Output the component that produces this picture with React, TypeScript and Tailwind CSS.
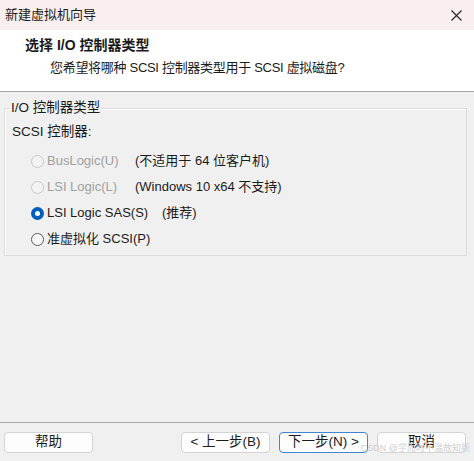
const font = {
  fontFamily: '"Liberation Sans", "Noto Sans CJK SC", sans-serif',
};

type Opt = { label: string; note?: string; disabled?: boolean; checked?: boolean; noteIndent?: boolean };

const options: Opt[] = [
  { label: 'BusLogic(U)', note: '(不适用于 64 位客户机)', disabled: true },
  { label: 'LSI Logic(L)', note: '(Windows 10 x64 不支持)', disabled: true },
  { label: 'LSI Logic SAS(S)', note: '(推荐)', checked: true, noteIndent: true },
  { label: '准虚拟化 SCSI(P)' },
];

function Radio({ checked, disabled }: { checked?: boolean; disabled?: boolean }) {
  if (checked) {
    return (
      <span className="w-[13px] h-[13px] rounded-full bg-[#005fb8] flex items-center justify-center shrink-0">
        <span className="w-[5px] h-[5px] rounded-full bg-white" />
      </span>
    );
  }
  return (
    <span
      className={`w-[13px] h-[13px] rounded-full border shrink-0 ${
        disabled ? 'border-[#c8c8c8] bg-[#f3f3f3]' : 'border-[#5a5a5a] bg-[#f7f7f7]'
      }`}
    />
  );
}

function Btn({ children, primary }: { children: React.ReactNode; primary?: boolean }) {
  return (
    <button
      className={`w-[89px] h-[21px] rounded-[4px] bg-[#fdfdfd] text-[13.5px] text-[#1b1b1b] leading-none flex items-center justify-center border ${
        primary ? 'border-[#3f86d0]' : 'border-[#d4d4d4]'
      }`}
    >
      {children}
    </button>
  );
}

export default function App() {
  return (
    <div className="w-[474px] h-[461px] bg-[#f0f0f0] flex flex-col overflow-hidden text-[#1b1b1b]" style={font}>
      <div className="h-[30px] bg-[#f9efee] flex items-center justify-between pl-[5px] pr-[10px] text-[13px]">
        <span>新建虚拟机向导</span>
        <svg width="11" height="11" viewBox="0 0 11 11" className="mr-[2px]">
          <path d="M0.5 0.5 L10.5 10.5 M10.5 0.5 L0.5 10.5" stroke="#222" strokeWidth="1.1" />
        </svg>
      </div>

      <div className="h-[62px] bg-white border-b border-[#a8a8a8] pl-[25px] pt-[6px]">
        <div className="text-[14px] font-bold leading-[18px]">选择 I/O 控制器类型</div>
        <div className="text-[13px] tracking-[-0.3px] leading-[20px] pl-[25px] mt-[4px] whitespace-nowrap">
          您希望将哪种 SCSI 控制器类型用于 SCSI 虚拟磁盘?
        </div>
      </div>

      <div className="flex-1 px-[4px] pt-[7px]">
        <fieldset className="w-[463px] h-[157px] border border-[#dcdcdc] shadow-[inset_1px_1px_0_#ffffff] px-[7px] pt-[6px]">
          <legend className="text-[13.5px] px-[1px] ml-[-2px] leading-[18px]">I/O 控制器类型</legend>
          <div className="text-[13.5px] leading-[18px]">SCSI 控制器:</div>
          <div className="mt-[7px] pl-[19px] flex flex-col">
            {options.map((o) => (
              <div key={o.label} className="h-[26px] flex items-center text-[13px] whitespace-nowrap">
                <Radio checked={o.checked} disabled={o.disabled} />
                <span className={`ml-[3px] w-[88px] ${o.disabled ? 'text-[#a0a0a0]' : ''}`}>{o.label}</span>
                {o.note && <span className={o.noteIndent ? 'ml-[27px]' : ''}>{o.note}</span>}
              </div>
            ))}
          </div>
        </fieldset>
      </div>

      <div className="h-[39px] border-t border-[#a8a8a8] flex items-center pl-[4px] pr-[8px]">
        <Btn>帮助</Btn>
        <div className="ml-auto flex gap-[9px]">
          <Btn>&lt; 上一步(B)</Btn>
          <Btn primary>下一步(N) &gt;</Btn>
          <div className="relative">
            <Btn>取消</Btn>
            <span className="absolute right-[-4px] bottom-[-3px] text-[9px] text-[#d0d0d0] whitespace-nowrap pointer-events-none">
              CSDN @学而时不温故知新
            </span>
          </div>
        </div>
      </div>
    </div>
  );
}
